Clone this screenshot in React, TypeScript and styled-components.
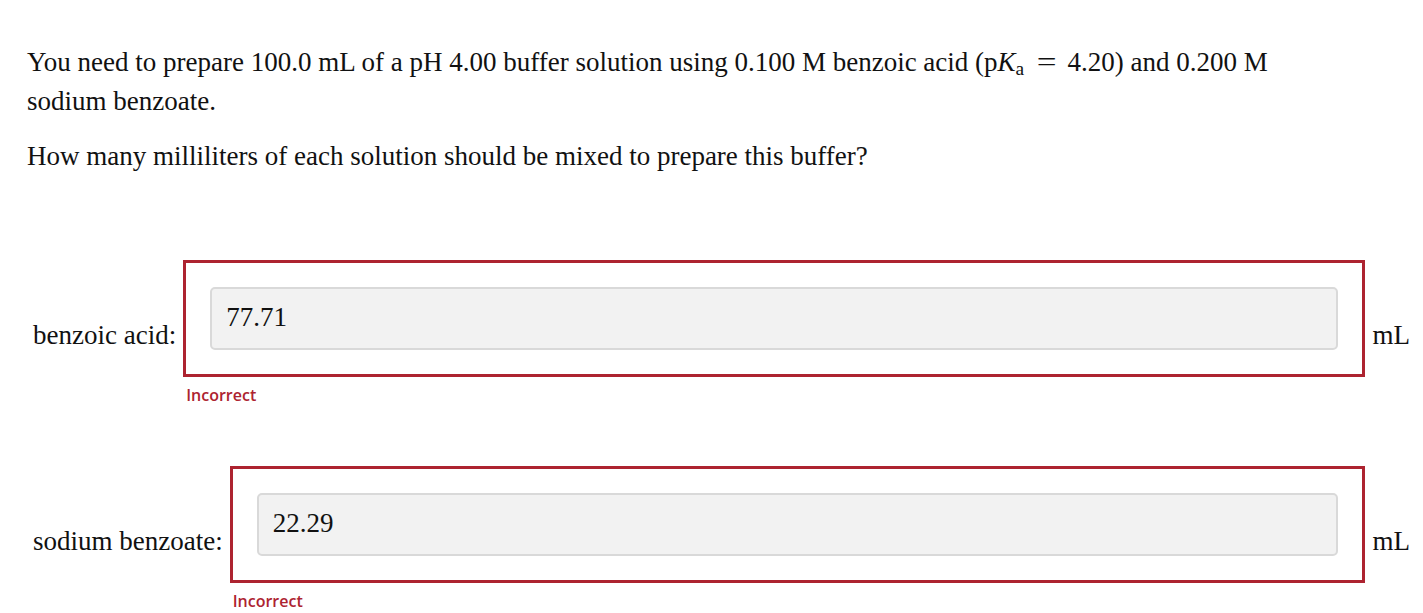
import React from "react";
import styled, { createGlobalStyle } from "styled-components";

const GlobalStyle = createGlobalStyle`
  html, body { margin: 0; padding: 0; background: #ffffff; }
  body {
    font-family: "Liberation Serif", "Times New Roman", serif;
    color: #111111;
  }
`;

const RED = "#ad2330";

const Page = styled.main`
  padding: 43px 13px 0 27px;
  font-size: 27px;
  line-height: 39px;
`;

const Prompt = styled.p`
  margin: 0 0 16px;
  width: 1300px;
`;

const Italic = styled.i`
  font-style: italic;
`;

const Sub = styled.sub`
  font-size: 0.72em;
  vertical-align: -0.2em;
  line-height: 1;
`;

const Operator = styled.span`
  display: inline-block;
  margin: 0 13px 0 15px;
  transform: scaleX(1.3);
`;

const Questions = styled.div`
  margin-top: 84px;
  display: flex;
  flex-direction: column;
  gap: 60px;
  padding-left: 6px;
`;

const Row = styled.div`
  display: grid;
  grid-template-columns: auto 1fr auto;
  grid-template-rows: auto auto;
  column-gap: 7px;
  align-items: end;
`;

const Label = styled.label`
  grid-column: 1;
  grid-row: 1;
  margin-bottom: 22px;
  white-space: nowrap;
`;

const Unit = styled.span`
  grid-column: 3;
  grid-row: 1;
  margin-bottom: 22px;
  margin-left: 1px;
`;

const AnswerBox = styled.div`
  grid-column: 2;
  grid-row: 1;
  border: 3px solid ${RED};
  padding: 24px;
`;

const Field = styled.input`
  display: block;
  box-sizing: border-box;
  width: 100%;
  height: 63px;
  margin: 0;
  padding: 0 0 3px 14px;
  border: 2px solid #d9d9d9;
  border-radius: 5px;
  background: #f2f2f2;
  font-family: "Liberation Serif", "Times New Roman", serif;
  font-size: 27px;
  color: #111111;
  outline: none;
`;

const Feedback = styled.div`
  grid-column: 2;
  grid-row: 2;
  margin: 7px 0 0 3px;
  font-family: "Open Sans", "Noto Sans", sans-serif;
  font-size: 16px;
  font-weight: 600;
  line-height: 22px;
  color: ${RED};
`;

type Answer = { label: string; value: string };

const answers: Answer[] = [
  { label: "benzoic acid:", value: "77.71" },
  { label: "sodium benzoate:", value: "22.29" },
];

export default function App() {
  return (
    <>
      <GlobalStyle />
      <Page>
        <Prompt>
          You need to prepare 100.0 mL of a pH 4.00 buffer solution using 0.100 M benzoic acid (p
          <Italic>K</Italic>
          <Sub>a</Sub>
          <Operator>=</Operator>4.20) and 0.200 M sodium benzoate.
        </Prompt>
        <Prompt>How many milliliters of each solution should be mixed to prepare this buffer?</Prompt>
        <Questions>
          {answers.map((a) => (
            <Row key={a.label}>
              <Label>{a.label}</Label>
              <AnswerBox>
                <Field readOnly value={a.value} aria-label={a.label} />
              </AnswerBox>
              <Unit>mL</Unit>
              <Feedback>Incorrect</Feedback>
            </Row>
          ))}
        </Questions>
      </Page>
    </>
  );
}
